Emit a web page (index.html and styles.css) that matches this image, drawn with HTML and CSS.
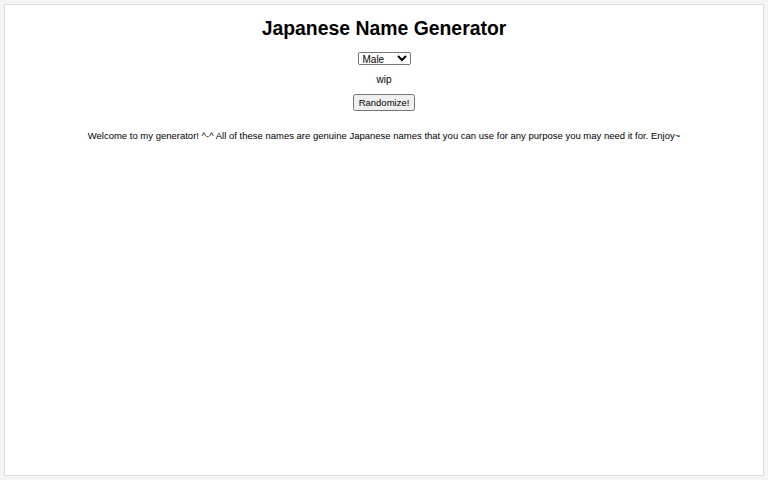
FILE: index.html
```html
<!DOCTYPE html>
<html lang="en">
<head>
    <meta charset="UTF-8">
    <title>Japanese Name Generator</title>
    <link rel="stylesheet" href="styles.css">
</head>
<body>
    <div class="container">
        <h1>Japanese Name Generator</h1>
        <select id="gender">
            <option value="male">Male</option>
            <option value="female">Female</option>
        </select>
        <p id="result">wip</p>
        <button id="randomize">Randomize!</button>
        <p class="intro">Welcome to my generator! ^-^ All of these names are genuine Japanese names that you can use for any purpose you may need it for. Enjoy~</p>
    </div>
</body>
</html>
```
FILE: styles.css
```css
* {
    box-sizing: border-box;
}

body {
    margin: 4px;
    background-color: #f4f4f4;
    font-family: "Liberation Sans", Arial, sans-serif;
    font-size: 10px;
    color: #000;
}

.container {
    background: #fff;
    border: 1px solid #dcdcdc;
    min-height: 472px;
    text-align: center;
    padding-top: 12px;
}

h1 {
    font-size: 19.4px;
    margin: 0 0 12px;
}

select {
    font-family: inherit;
    font-size: 10px;
    width: 53px;
    height: 13px;
    padding: 0;
}

p {
    margin: 9px 0;
}

button {
    font-family: inherit;
    font-size: 9.5px;
    padding: 1px 4px;
}

.intro {
    font-size: 9.5px;
    margin-top: 19px;
}
```
